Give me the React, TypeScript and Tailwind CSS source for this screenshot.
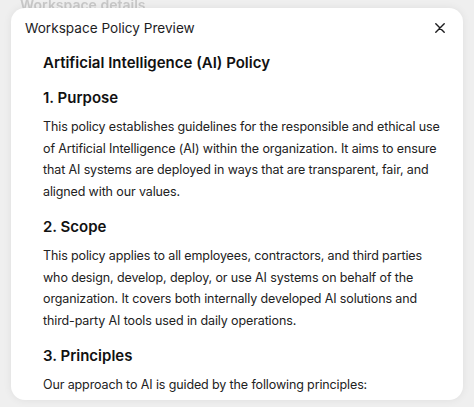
import React from 'react';

const sections = [
    {
        title: '1. Purpose',
        body: 'This policy establishes guidelines for the responsible and ethical use of Artificial Intelligence (AI) within the organization. It aims to ensure that AI systems are deployed in ways that are transparent, fair, and aligned with our values.',
    },
    {
        title: '2. Scope',
        body: 'This policy applies to all employees, contractors, and third parties who design, develop, deploy, or use AI systems on behalf of the organization. It covers both internally developed AI solutions and third-party AI tools used in daily operations.',
    },
    {
        title: '3. Principles',
        body: 'Our approach to AI is guided by the following principles:',
    },
];

const App: React.FC = () => {
    return (
        <div className="relative h-[407px] w-[474px] overflow-hidden bg-[#efefef] font-['Inter',sans-serif] text-[#1d1d1f]">
            {/* Page behind the dialog (dimmed) */}
            <div className="flex flex-col gap-[14px] px-[20px] -mt-[6px] text-[#c8c8c8] blur-[0.5px]">
                <div className="text-[14px] font-semibold">Workspace details</div>
                <div className="flex justify-end pr-[2px] text-[11px]">lb</div>
                <div className="flex justify-end text-[11px] pt-[28px]">-4</div>
                <div className="flex justify-end text-[10px] pt-[210px]">i1</div>
            </div>

            {/* Dialog */}
            <div className="absolute left-[11px] top-[8px] flex h-[392px] w-[452px] flex-col overflow-hidden rounded-[14px] bg-white shadow-[0_0_8px_rgba(0,0,0,0.07)]">
                <div className="flex items-center justify-between pl-[14px] pr-[13px] pt-[10px]">
                    <h1 className="text-[13.6px] leading-[20px] text-[#1d1d1f]">Workspace Policy Preview</h1>
                    <button className="flex h-[20px] w-[20px] items-center justify-center text-[#1d1d1f]">
                        <svg width="10" height="10" viewBox="0 0 10 10" fill="none" stroke="currentColor" strokeWidth="1.4" strokeLinecap="round">
                            <path d="M0.8 0.8l8.4 8.4M9.2 0.8L0.8 9.2" />
                        </svg>
                    </button>
                </div>
                <div className="pl-[32px] pr-[19px] pt-[14px]">
                    <h2 className="text-[15px] font-semibold leading-[22px] text-[#111]">Artificial Intelligence (AI) Policy</h2>
                    {sections.map(s => (
                        <div key={s.title} className="mt-[13px]">
                            <h3 className="text-[15px] font-semibold leading-[22px] text-[#111]">{s.title}</h3>
                            <p className="mt-[7px] text-[12.5px] tracking-[-0.12px] leading-[21.7px] text-[#222]">{s.body}</p>
                        </div>
                    ))}
                </div>
            </div>
        </div>
    );
};

export default App;
